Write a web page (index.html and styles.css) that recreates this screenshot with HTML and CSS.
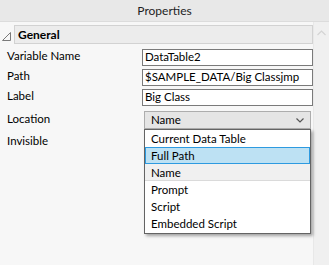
FILE: index.html
```html
<!DOCTYPE html>
<html>
<head>
<meta charset="utf-8">
<link rel="stylesheet" href="styles.css">
</head>
<body>
<div class="window">
  <div class="titlebar">Properties</div>
  <div class="content">
    <div class="panel">
      <div class="section">
        <svg class="tri" width="9" height="9" viewBox="0 0 9 9"><path d="M8.5 0.5 L8.5 8.5 L0.5 8.5 Z" fill="none" stroke="#7a7a7a" stroke-width="1"/></svg>
        <div class="section-head">General</div>
      </div>
      <div class="rows">
        <div class="row r1"><span class="label">Variable Name</span><div class="input">DataTable2</div></div>
        <div class="row r2"><span class="label">Path</span><div class="input">$SAMPLE_DATA/Big Classjmp</div></div>
        <div class="row r3"><span class="label">Label</span><div class="input">Big Class</div></div>
        <div class="row r4"><span class="label">Location</span>
          <div class="combo-wrap">
            <div class="combo">Name
              <svg class="chev" width="8" height="5" viewBox="0 0 8 5"><path d="M0.5 0.5 L4 4 L7.5 0.5" fill="none" stroke="#555" stroke-width="1.2"/></svg>
            </div>
            <div class="menu">
              <div class="item">Current Data Table</div>
              <div class="item hover">Full Path</div>
              <div class="item selected">Name</div>
              <div class="item">Prompt</div>
              <div class="item">Script</div>
              <div class="item">Embedded Script</div>
            </div>
          </div>
        </div>
        <div class="row r5"><span class="label">Invisible</span></div>
      </div>
    </div>
    <div class="scrollbar">
      <svg width="9" height="6" viewBox="0 0 9 6"><path d="M0.5 5 L4.5 1 L8.5 5" fill="none" stroke="#d4d4d4" stroke-width="1.2"/></svg>
    </div>
  </div>
</div>
</body>
</html>
```
FILE: styles.css
```css
html, body { margin: 0; padding: 0; }
body {
  width: 329px; height: 265px; overflow: hidden;
  font-family: "Lato", "Open Sans", sans-serif;
  font-size: 11.5px; color: #000;
  background: #f7f7f7;
}
.window { display: flex; flex-direction: column; height: 265px; }
.titlebar {
  height: 22px; line-height: 22px; text-align: center;
  background: #e8e8e8; color: #1e1e1e; font-size: 12px;
  border-bottom: 1px solid #dcdcdc; box-sizing: border-box;
}
.content { flex: 1; display: flex; }
.panel { flex: 1; padding-top: 3px; }
.scrollbar {
  width: 16px; background: #f0f0f0; border-left: 1px solid #e8e8e8;
  display: flex; justify-content: center; padding-top: 8px; box-sizing: border-box;
}
.section { display: flex; align-items: center; height: 19px; }
.tri { margin: 3px 3px 0 2px; }
.section-head {
  flex: 1; height: 19px; line-height: 17px; box-sizing: border-box;
  background: #ececec; border: 1px solid #d2d2d2;
  font-weight: bold; font-size: 12px; padding-left: 3px;
}
.rows { padding-top: 5px; }
.row { display: flex; align-items: flex-start; }
.label { width: 135px; padding-left: 7px; line-height: 17px; margin-top: -2px; }
.input {
  flex: 1; height: 17px; box-sizing: border-box;
  border: 1px solid #7a7a7a; background: #fff;
  padding-left: 2px; line-height: 14px; margin-bottom: 3px;
}
.r4 { margin-top: 2px; height: 22px; }
.r4 .label { margin-top: -1px; }
.combo-wrap { position: relative; flex: 1; margin-left: 2px; margin-right: 2px; }
.combo {
  height: 18px; box-sizing: border-box; background: #e5e5e5; border: 1px solid #adadad;
  padding-left: 6px; line-height: 16px; position: relative;
}
.chev { position: absolute; right: 6px; top: 6px; }
.menu {
  position: absolute; left: 0; right: 0; top: 18px; z-index: 2;
  background: #fff; border: 1px solid #646464;
  box-shadow: 2px 2px 3px rgba(0,0,0,0.35);
  padding: 0 0 1px;
}
.item { height: 17px; line-height: 17px; padding-left: 6px; box-sizing: border-box; }
.item.hover { background: #bde1f3; border: 1px solid #2d9ae0; padding-left: 5px; line-height: 15px; }
.item.selected { background: #f0f0f0; border-bottom: 1px solid #dadada; }
.r5 .label { margin-top: -1px; }
```
